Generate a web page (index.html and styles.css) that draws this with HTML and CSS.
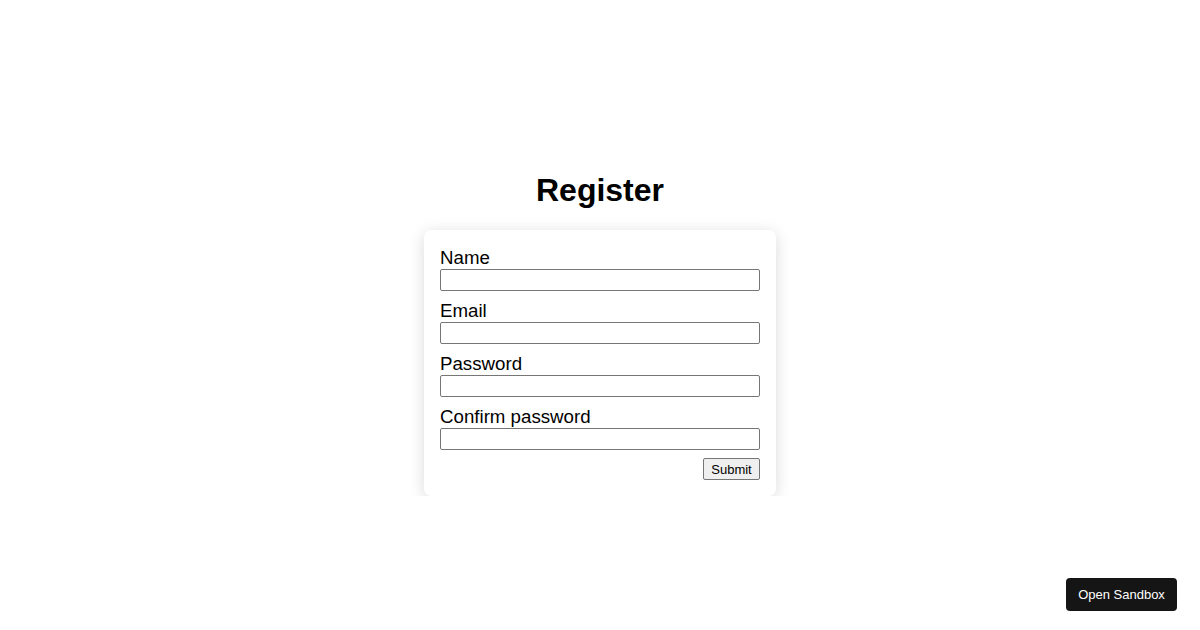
FILE: index.html
```html
<!DOCTYPE html>
<html>
<head>
<meta charset="utf-8">
<link rel="stylesheet" href="styles.css">
</head>
<body>
<main class="page">
  <h1 class="title">Register</h1>
  <form class="card">
    <div class="field">
      <label class="label">Name</label>
      <input class="input" type="text">
    </div>
    <div class="field">
      <label class="label">Email</label>
      <input class="input" type="text">
    </div>
    <div class="field">
      <label class="label">Password</label>
      <input class="input" type="password">
    </div>
    <div class="field">
      <label class="label">Confirm password</label>
      <input class="input" type="password">
    </div>
    <div class="actions">
      <button class="submit" type="button">Submit</button>
    </div>
  </form>
</main>
<button class="sandbox" type="button">Open Sandbox</button>
</body>
</html>
```
FILE: styles.css
```css
html, body {
  margin: 0;
  padding: 0;
  background: #fff;
  font-family: "Liberation Sans", Arial, sans-serif;
  color: #000;
}
.page {
  display: flex;
  flex-direction: column;
  align-items: center;
  padding-top: 172px;
}
.title {
  margin: 0 0 21px;
  font-size: 32px;
  line-height: 37px;
  font-weight: 700;
}
.card {
  width: 320px;
  padding: 16px;
  background: #fff;
  border-radius: 7px;
  box-shadow: 0 3px 16px rgba(0, 0, 0, 0.15);
  display: flex;
  flex-direction: column;
}
.field {
  display: flex;
  flex-direction: column;
  margin-bottom: 8px;
}
.label {
  font-size: 18.7px;
  line-height: 23px;
}
.input {
  box-sizing: border-box;
  width: 320px;
  height: 22px;
  margin: 0;
  border: 1px solid #767676;
  border-radius: 2px;
  padding: 1px 2px;
  font-size: 13px;
  font-family: "Liberation Sans", Arial, sans-serif;
}
.actions {
  display: flex;
  justify-content: flex-end;
}
.submit {
  box-sizing: border-box;
  width: 57px;
  height: 22px;
  margin: 0;
  padding: 0;
  border: 1px solid #767676;
  border-radius: 2px;
  background: #efefef;
  font-family: "Liberation Sans", Arial, sans-serif;
  font-size: 13px;
  color: #000;
}
.sandbox {
  position: fixed;
  right: 23px;
  bottom: 19px;
  width: 111px;
  height: 33px;
  border: none;
  border-radius: 4px;
  background: #151515;
  color: #fff;
  font-family: "Liberation Sans", Arial, sans-serif;
  font-size: 13px;
  padding: 0;
}
```
